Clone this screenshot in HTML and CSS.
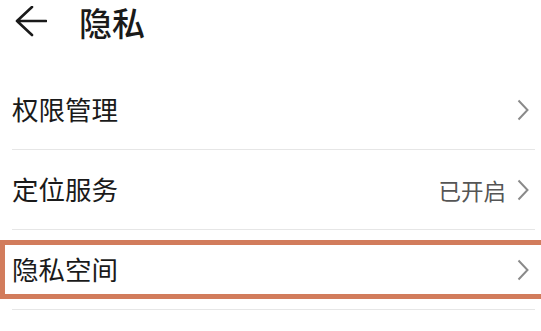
FILE: index.html
```html
<!DOCTYPE html>
<html lang="zh-CN">
<head>
<meta charset="utf-8">
<title>隐私</title>
<link rel="stylesheet" href="styles.css">
</head>
<body>
<header class="header">
  <svg class="back" width="32" height="32" viewBox="0 0 32 32" aria-hidden="true">
    <path d="M2 15 H31 M17 1 L2 15 L17 29" fill="none" stroke="#1a1a1a" stroke-width="2.6" stroke-linecap="round" stroke-linejoin="round"/>
  </svg>
  <div class="title">隐私</div>
</header>
<ul class="list">
  <li class="row">
    <span class="label">权限管理</span>
    <span class="right">
      <svg class="chev" width="12" height="22" viewBox="0 0 12 22" aria-hidden="true"><path d="M1.5 1.5 L10.5 11 L1.5 20.5" fill="none" stroke="#8a8a8a" stroke-width="2"/></svg>
    </span>
  </li>
  <li class="row">
    <span class="label">定位服务</span>
    <span class="right">
      <span class="value">已开启</span>
      <svg class="chev" width="12" height="22" viewBox="0 0 12 22" aria-hidden="true"><path d="M1.5 1.5 L10.5 11 L1.5 20.5" fill="none" stroke="#8a8a8a" stroke-width="2"/></svg>
    </span>
  </li>
  <li class="row highlighted">
    <span class="label">隐私空间</span>
    <span class="right">
      <svg class="chev" width="12" height="22" viewBox="0 0 12 22" aria-hidden="true"><path d="M1.5 1.5 L10.5 11 L1.5 20.5" fill="none" stroke="#8a8a8a" stroke-width="2"/></svg>
    </span>
    <span class="mark"></span>
  </li>
</ul>
</body>
</html>
```
FILE: styles.css
```css
html, body {
  margin: 0;
  padding: 0;
  background: #ffffff;
}
body {
  font-family: "Noto Sans CJK SC", "Noto Sans", sans-serif;
  color: #1a1a1a;
  position: relative;
  overflow-x: hidden;
}
.header {
  height: 46px;
  display: flex;
  align-items: center;
  padding-left: 15px;
}
.back {
  display: block;
  flex: none;
  margin-bottom: 2px;
}
.title {
  margin: 0 0 2px 32px;
  font-size: 33px;
  font-weight: 500;
  line-height: 1.3;
  white-space: nowrap;
}
.list {
  list-style: none;
  margin: 24px 0 0 0;
  padding: 0;
}
.row {
  position: relative;
  height: 79px;
  margin: 0 6px 0 12px;
  border-bottom: 1px solid #e6e6e6;
  display: flex;
  align-items: center;
  justify-content: space-between;
  padding-right: 6px;
}
.label {
  font-size: 26.5px;
  line-height: 1.3;
}
.right {
  display: flex;
  align-items: center;
  gap: 11px;
}
.value {
  font-size: 22.5px;
  color: #555555;
}
.chev {
  display: block;
}
.mark {
  position: absolute;
  left: -12px;
  right: -20px;
  top: 10px;
  bottom: 10px;
  border: 5px solid #d27c5c;
  pointer-events: none;
}
```
